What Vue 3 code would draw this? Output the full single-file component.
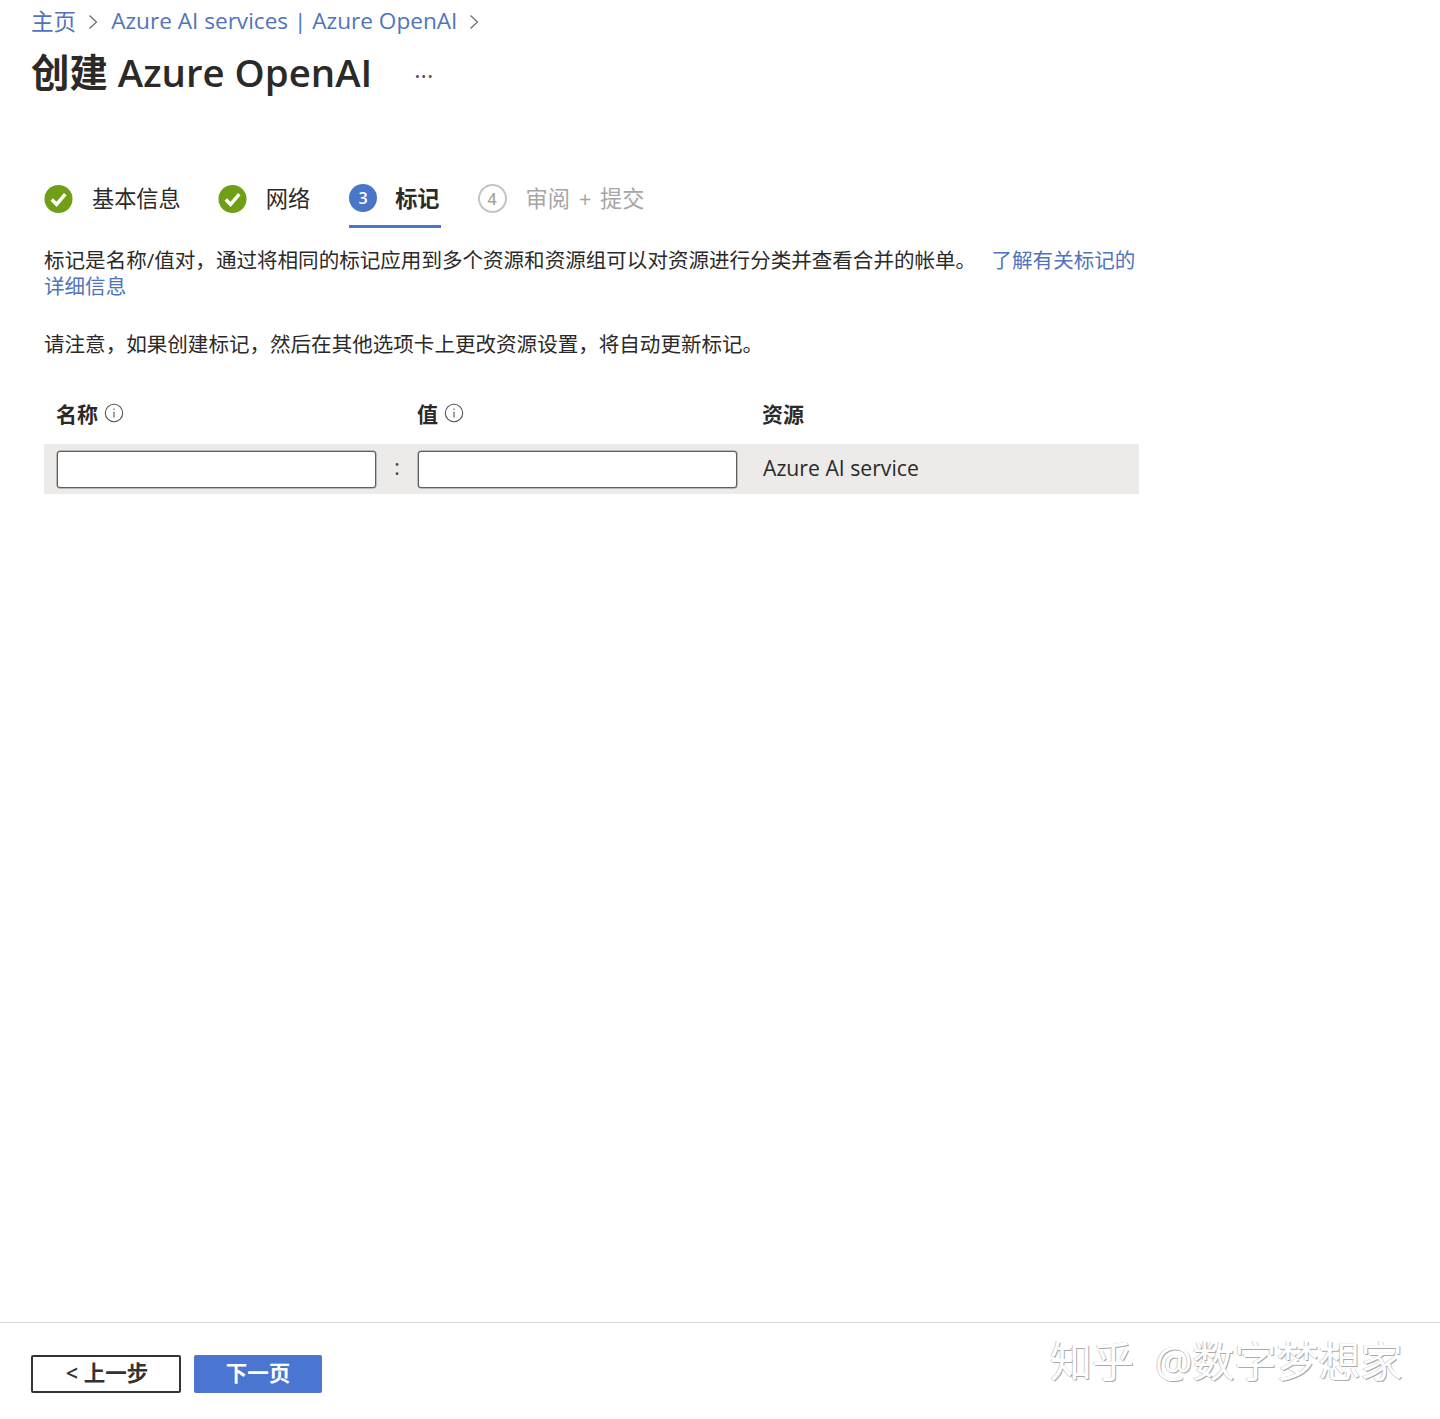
<template>
  <div class="page">
    <div class="main">
      <!-- 面包屑 -->
      <nav class="crumbs">
        <a>主页</a>
        <svg class="chev" viewBox="0 0 10 16"><path d="M1.5 1.5 8.5 8 1.5 14.5" /></svg>
        <a>Azure AI services | Azure OpenAI</a>
        <svg class="chev" viewBox="0 0 10 16"><path d="M1.5 1.5 8.5 8 1.5 14.5" /></svg>
      </nav>
      <div class="title-row">
        <h1>创建 Azure OpenAI</h1>
        <span class="more">...</span>
      </div>

      <div class="content">
        <!-- 步骤 -->
        <div class="tabs">
          <div v-for="tab in tabs" :key="tab.label" class="tab" :class="tab.state">
            <span class="step-icon">
              <svg v-if="tab.state === 'done'" viewBox="0 0 30 30">
                <circle cx="15" cy="15" r="14.5" fill="#6f9e17" />
                <path d="M8 15.5 13 20.5 22 10" fill="none" stroke="#fff" stroke-width="3.6" />
              </svg>
              <template v-else>{{ tab.num }}</template>
            </span>
            <span class="tab-label">{{ tab.label }}</span>
          </div>
        </div>

        <p class="desc">标记是名称/值对，通过将相同的标记应用到多个资源和资源组可以对资源进行分类并查看合并的帐单。 <a>了解有关标记的详细信息</a></p>
        <p class="note">请注意，如果创建标记，然后在其他选项卡上更改资源设置，将自动更新标记。</p>

        <div class="grid head">
          <div class="th">名称<svg class="info" viewBox="0 0 20 20"><circle cx="10" cy="10" r="8.7" /><path d="M10 8.8v5.6M10 5.4v1.6" /></svg></div>
          <div></div>
          <div class="th">值<svg class="info" viewBox="0 0 20 20"><circle cx="10" cy="10" r="8.7" /><path d="M10 8.8v5.6M10 5.4v1.6" /></svg></div>
          <div class="th res">资源</div>
        </div>
        <div class="grid row">
          <input class="field" type="text" />
          <span class="colon">:</span>
          <input class="field" type="text" />
          <span class="res-val">Azure AI service</span>
        </div>
      </div>
    </div>

    <footer class="footer">
      <button class="btn prev">&lt; 上一步</button>
      <button class="btn next">下一页</button>
      <span class="watermark">知乎 @数字梦想家</span>
    </footer>
  </div>
</template>

<script setup>
const tabs = [
  { label: '基本信息', state: 'done' },
  { label: '网络', state: 'done' },
  { label: '标记', state: 'active', num: 3 },
  { label: '审阅 + 提交', state: 'todo', num: 4 }
]
</script>

<style>
body {
  margin: 0;
  background: #fff;
}
</style>

<style scoped>
.page {
  height: 1419px;
  display: flex;
  flex-direction: column;
  font-family: "Open Sans", "Noto Sans CJK SC", sans-serif;
  color: #2b2a29;
  overflow: hidden;
}

.main {
  flex: 1;
  padding-left: 31px;
}

.crumbs {
  display: flex;
  align-items: center;
  height: 40px;
  font-size: 22.6px;
  color: #4f74bd;
}

.chev {
  width: 10px;
  height: 16px;
  margin: 3px 13px 0 12px;
  fill: none;
  stroke: #6a6a6a;
  stroke-width: 1.2;
}

.title-row {
  display: flex;
  align-items: center;
  height: 64px;
}

h1 {
  margin: 0;
  font-size: 38.4px;
  font-weight: 600;
  line-height: 64px;
}

.more {
  margin: -8px 0 0 42px;
  font-size: 24px;
  color: #555;
}

.content {
  width: 1095px;
  margin: 0 0 0 13px;
  padding-top: 75px;
}

.tabs {
  display: flex;
  gap: 37px;
  height: 50px;
}

.tab {
  display: flex;
  align-items: flex-start;
  gap: 19px;
  height: 46px;
  font-size: 22.2px;
  line-height: 40px;
  box-sizing: content-box;
}

.tab.active {
  gap: 18px;
  margin-left: 2px;
  padding-right: 1px;
  font-weight: 600;
  border-bottom: 3px solid #4a76c9;
}

.tab.todo {
  color: #a6a6a6;
  word-spacing: 3px;
}

.step-icon {
  display: flex;
  align-items: center;
  justify-content: center;
  box-sizing: border-box;
  width: 29px;
  height: 29px;
  margin-top: 5px;
  border-radius: 50%;
  font-size: 16px;
  font-weight: 600;
  line-height: 1;
}

.step-icon svg {
  width: 30px;
  height: 30px;
}

.active .step-icon {
  width: 28px;
  height: 28px;
  background: #4a76c9;
  color: #fff;
}

.todo .step-icon {
  border: 2px solid #c4c4c4;
  color: #a6a6a6;
}

.desc,
.note {
  margin: 0;
  font-size: 20.55px;
  line-height: 26px;
}

.desc {
  margin-top: 18px;
}

.desc a {
  color: #4f74bd;
  margin-left: 10px;
}

.note {
  margin-top: 32px;
}

.grid {
  display: grid;
  grid-template-columns: 319px 42px 319px 1fr;
  align-items: center;
}

.head {
  margin-top: 41px;
  height: 46px;
  padding-left: 12px;
  align-items: start;
}

.th {
  display: flex;
  align-items: center;
  gap: 6px;
  font-size: 21px;
  font-weight: 600;
  height: 30px;
}

.res {
  margin-left: 26px;
}

.info {
  width: 20px;
  height: 20px;
  margin-top: -1px;
  fill: none;
  stroke: #555;
  stroke-width: 1.1;
}

.row {
  height: 50px;
  padding-left: 13px;
  background: #edebe9;
}

.field {
  box-sizing: border-box;
  width: 319px;
  height: 37px;
  margin-top: 1px;
  border: 1px solid #605e5c;
  border-radius: 3px;
  background: #fff;
  box-shadow: 0 0 0 0.5px #8a8886;
}

.colon {
  margin-bottom: 4px;
  text-align: center;
  font-size: 21px;
  color: #444;
}

.res-val {
  margin: 0 0 4px 26px;
  font-size: 21.2px;
}

.footer {
  position: relative;
  display: flex;
  gap: 13px;
  height: 97px;
  box-sizing: border-box;
  padding: 32px 0 0 31px;
  border-top: 1px solid #d6d6d6;
}

.btn {
  height: 38px;
  border-radius: 2px;
  font-family: inherit;
  font-size: 21.5px;
  font-weight: 600;
  line-height: 1;
  padding: 0 0 3px;
}

.prev {
  width: 150px;
  padding-left: 2px;
  background: #fff;
  border: 2px solid #333;
  color: #333;
}

.next {
  width: 128px;
  background: #4a76d1;
  border: none;
  color: #fff;
}

/* 水印压在页脚上 */
.watermark {
  position: absolute;
  left: 1050px;
  top: 8px;
  font-size: 42px;
  line-height: 60px;
  word-spacing: 10px;
  color: #fff;
  text-shadow: 1px 1px 0 #aaa, -1px 0 0 #d0d0d0;
  white-space: nowrap;
}
</style>
